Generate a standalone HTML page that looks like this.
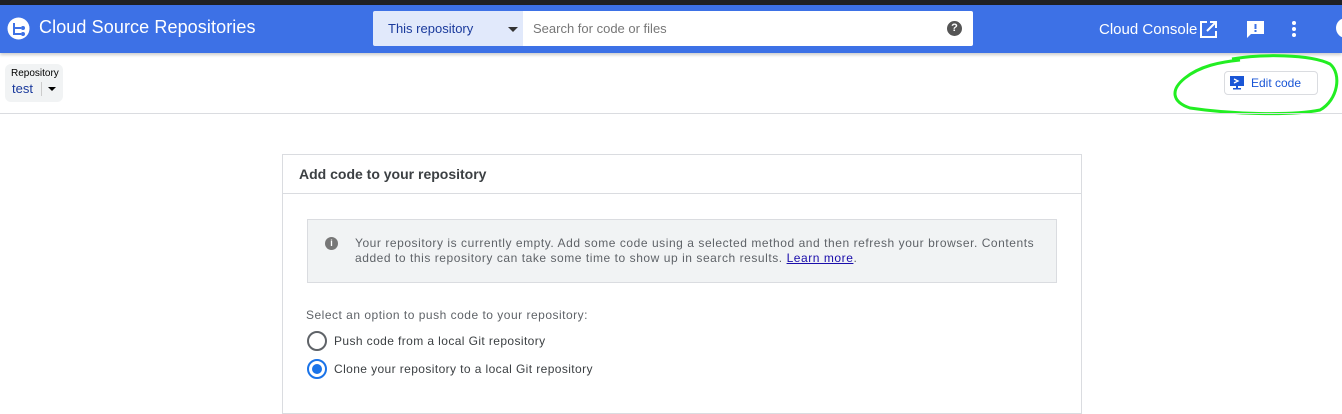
<!DOCTYPE html>
<html><head><style>
*{box-sizing:border-box;margin:0;padding:0}
body{width:1342px;height:400px;overflow:hidden;background:#fff;font-family:"Liberation Sans",Arial,sans-serif;position:relative}
.a{position:absolute}
</style></head><body>
<div class="a" style="left:0;top:0;width:1342px;height:5px;background:#202124"></div>
<div class="a" style="left:0;top:5px;width:1342px;height:48px;background:#3d71e6;box-shadow:0 2px 3px rgba(0,0,0,.2)"></div>
<svg class="a" style="left:7px;top:17px" width="23" height="23" viewBox="0 0 23 23"><circle cx="11.5" cy="11.5" r="11" fill="#fff"/><path d="M7 6v11h7M7 11h7" stroke="#3d71e6" stroke-width="2" fill="none"/><circle cx="16" cy="11" r="2" fill="#3d71e6"/><circle cx="16" cy="17" r="2" fill="#3d71e6"/></svg>
<div class="a" style="left:39px;top:17px;color:#fff;font-size:18px;letter-spacing:0.1px">Cloud Source Repositories</div>
<div class="a" style="left:373px;top:11px;width:150px;height:35px;background:#e1e9fb;border-radius:2px 0 0 2px"></div>
<div class="a" style="left:388px;top:21px;font-size:13px;color:#1a3a9c">This repository</div>
<div class="a" style="left:508px;top:27px;border-left:5px solid transparent;border-right:5px solid transparent;border-top:5px solid #333"></div>
<div class="a" style="left:523px;top:11px;width:450px;height:35px;background:#fff;border-radius:0 2px 2px 0"></div>
<div class="a" style="left:533px;top:21px;font-size:13px;color:#777">Search for code or files</div>
<div class="a" style="left:947px;top:21px;width:15px;height:15px;border-radius:50%;background:#555;color:#fff;font-size:11px;font-weight:bold;text-align:center;line-height:15px">?</div>
<div class="a" style="left:1099px;top:21px;color:#fff;font-size:15px">Cloud Console</div>
<svg class="a" style="left:1199px;top:20px" width="19" height="19" viewBox="0 0 19 19"><path d="M8 2H2v15h15v-6M11 2h6v6M17 2L8 11" stroke="#fff" stroke-width="2" fill="none"/></svg>
<svg class="a" style="left:1245px;top:19px" width="21" height="21" viewBox="0 0 21 21"><path d="M2 2h17v13H6l-4 4z" fill="#fff"/><rect x="9.5" y="5" width="2" height="5" fill="#3d71e6"/><rect x="9.5" y="11" width="2" height="2" fill="#3d71e6"/></svg>
<div class="a" style="left:1292px;top:21px;width:4px;height:4px;border-radius:50%;background:#fff;box-shadow:0 6px 0 #fff,0 12px 0 #fff"></div>
<div class="a" style="left:1336px;top:18px;width:20px;height:20px;border-radius:50%;background:#fff"></div>
<div class="a" style="left:5px;top:64px;width:58px;height:38px;background:#f1f3f4;border-radius:6px"></div>
<div class="a" style="left:11px;top:68px;font-size:10px;color:#000">Repository</div>
<div class="a" style="left:12px;top:81px;font-size:13px;color:#1a3a9c">test</div>
<div class="a" style="left:41px;top:82px;width:1px;height:14px;background:#ccc"></div>
<div class="a" style="left:48px;top:87px;border-left:4px solid transparent;border-right:4px solid transparent;border-top:4px solid #000"></div>
<div class="a" style="left:1224px;top:71px;width:94px;height:24px;border:1px solid #dadce0;border-radius:4px"></div>
<svg class="a" style="left:1230px;top:76px" width="14" height="14" viewBox="0 0 14 14"><rect x="0" y="0" width="14" height="10" fill="#1a56d6"/><path d="M4 3l4 2-4 2" stroke="#fff" stroke-width="1.3" fill="none"/><rect x="6" y="10" width="2" height="3" fill="#1a56d6"/><rect x="3" y="12" width="8" height="1.5" fill="#1a56d6"/></svg>
<div class="a" style="left:1251px;top:76px;font-size:12px;color:#1a56d6">Edit code</div>
<svg class="a" style="left:1170px;top:50px" width="172" height="70" viewBox="0 0 172 70"><path d="M62 9C90 4 140 4 160 14C172 24 168 50 150 60C120 66 60 64 20 58C2 52 0 40 15 28C30 16 50 12 70 10" stroke="#22ee22" stroke-width="3" fill="none"/></svg>
<div class="a" style="left:0;top:113px;width:1342px;height:1px;background:#dadce0"></div>
<div class="a" style="left:282px;top:154px;width:800px;height:260px;border:1px solid #dadce0"></div>
<div class="a" style="left:283px;top:193px;width:798px;height:1px;background:#dadce0"></div>
<div class="a" style="left:299px;top:166px;font-size:14px;font-weight:bold;color:#3c4043">Add code to your repository</div>
<div class="a" style="left:307px;top:219px;width:750px;height:64px;background:#f1f3f4;border:1px solid #dadce0"></div>
<div class="a" style="left:325px;top:237px;width:13px;height:13px;border-radius:50%;background:#777;color:#fff;font-size:9px;font-weight:bold;text-align:center;line-height:13px">i</div>
<div class="a" style="left:355px;top:236px;font-size:12px;line-height:15px;color:#5f6368;white-space:nowrap;letter-spacing:0.55px">Your repository is currently empty. Add some code using a selected method and then refresh your browser. Contents<br>added to this repository can take some time to show up in search results. <span style="color:#1a0dab;text-decoration:underline">Learn more</span>.</div>
<div class="a" style="left:306px;top:308px;font-size:12px;color:#5f6368;letter-spacing:0.5px">Select an option to push code to your repository:</div>
<div class="a" style="left:307px;top:331px;width:20px;height:20px;border-radius:50%;border:2px solid #5f6368"></div>
<div class="a" style="left:334px;top:334px;font-size:12px;color:#3c4043;letter-spacing:0.4px">Push code from a local Git repository</div>
<div class="a" style="left:307px;top:359px;width:20px;height:20px;border-radius:50%;border:2px solid #1a73e8"></div>
<div class="a" style="left:312px;top:364px;width:10px;height:10px;border-radius:50%;background:#1a73e8"></div>
<div class="a" style="left:334px;top:362px;font-size:12px;color:#3c4043;letter-spacing:0.4px">Clone your repository to a local Git repository</div>
</body></html>
